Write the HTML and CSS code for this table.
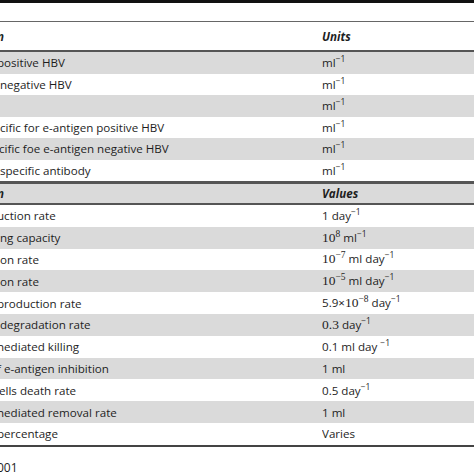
FILE: index.html
```html
<!DOCTYPE html>
<html>
<head>
<meta charset="utf-8">
<link rel="stylesheet" href="styles.css">
</head>
<body>
<div class="page">
  <div class="topbar"></div>
  <div class="gap"></div>
  <table class="tbl">
    <colgroup><col class="c1"><col class="c2"></colgroup>
    <thead>
      <tr class="head"><th><span class="cut">n</span></th><th>Units</th></tr>
    </thead>
    <tbody class="vars">
      <tr class="g"><td><span class="cut">positive HBV</span></td><td>ml<sup>−1</sup></td></tr>
      <tr><td>negative HBV</td><td>ml<sup>−1</sup></td></tr>
      <tr class="g"><td></td><td>ml<sup>−1</sup></td></tr>
      <tr><td>cific for e-antigen positive HBV</td><td>ml<sup>−1</sup></td></tr>
      <tr class="g"><td><span class="cut1">cific foe e-antigen negative HBV</span></td><td>ml<sup>−1</sup></td></tr>
      <tr><td>specific antibody</td><td>ml<sup>−1</sup></td></tr>
    </tbody>
    <tbody class="params">
      <tr class="head2 g"><th><span class="cut">n</span></th><th>Values</th></tr>
      <tr><td><span class="cut">uction rate</span></td><td>1 day<sup>−1</sup></td></tr>
      <tr class="g"><td>ng capacity</td><td><span class="m">10<sup>8</sup></span> ml<sup>−1</sup></td></tr>
      <tr><td>on rate</td><td><span class="m">10<sup>−7</sup></span> ml day<sup>−1</sup></td></tr>
      <tr class="g"><td>on rate</td><td><span class="m">10<sup>−5</sup></span> ml day<sup>−1</sup></td></tr>
      <tr><td><span class="cut">production rate</span></td><td>5.9×<span class="m">10<sup>−8</sup></span> day<sup>−1</sup></td></tr>
      <tr class="g"><td>degradation rate</td><td><span class="m">0.3</span> day<sup>−1</sup></td></tr>
      <tr><td><span class="cut">nediated killing</span></td><td>0.1 ml day <sup>−1</sup></td></tr>
      <tr class="g"><td><span class="cut">f e-antigen inhibition</span></td><td>1 ml</td></tr>
      <tr><td><span class="cut1">ells death rate</span></td><td>0.5 day<sup>−1</sup></td></tr>
      <tr class="g"><td><span class="cut">nediated removal rate</span></td><td>1 ml</td></tr>
      <tr><td><span class="cut">percentage</span></td><td>Varies</td></tr>
    </tbody>
  </table>
  <p class="foot">001</p>
</div>
</body>
</html>
```
FILE: styles.css
```css
html, body {
  margin: 0;
  padding: 0;
  background: #fff;
}
.page {
  width: 474px;
  height: 474px;
  overflow: hidden;
  font-family: "Open Sans", "Noto Sans", "DejaVu Sans", sans-serif;
  font-size: 11.6px;
  color: #1e1e1e;
}
.topbar {
  height: 3px;
  background: #111;
}
.gap {
  height: 18px;
  border-bottom: 1.5px solid #666;
}
.tbl {
  width: 474px;
  border-collapse: collapse;
  table-layout: fixed;
}
.c1 { width: 322px; }
.c2 { width: 152px; }
.tbl th, .tbl td {
  padding: 0;
  text-align: left;
  vertical-align: middle;
  white-space: nowrap;
  overflow: hidden;
}
.tbl th {
  font-style: italic;
  font-weight: 700;
}
.head th {
  height: 28px;
  border-bottom: 2px solid #555;
}
.vars td {
  height: 21.5px;
}
.head2 th {
  height: 19px;
  border-top: 3px solid #555;
  border-bottom: 2px solid #555;
}
.params td {
  height: 21.8px;
}
.params tr:last-child td {
  border-bottom: 2px solid #444;
}
.g td, .g th {
  background: #dadada;
}
.cut { margin-left: -3px; }
.cut1 { margin-left: -1px; }
sup {
  font-size: 8.5px;
  line-height: 0;
  vertical-align: 5px;
}
.m {
  font-family: "Liberation Serif", "Times New Roman", serif;
  font-size: 13.5px;
}
.m sup {
  font-size: 9.5px;
}
.foot {
  margin: 12px 0 0 -3px;
  font-size: 12px;
}
```
